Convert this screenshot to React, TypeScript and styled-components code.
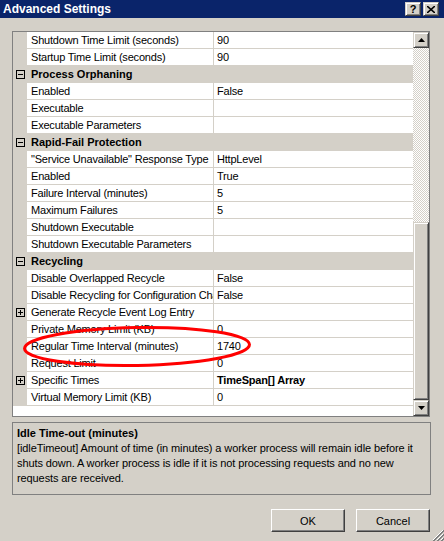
import React from "react";
import styled, { createGlobalStyle, css } from "styled-components";

const GlobalStyle = createGlobalStyle`
  html, body {
    margin: 0;
    padding: 0;
    background: #d4d0c8;
  }
  body {
    font-family: "Liberation Sans", Arial, sans-serif;
    font-size: 11px;
    color: #000;
  }
`;

type PropRow = {
  kind: "prop";
  name: string;
  value?: string;
  boldValue?: boolean;
  expand?: boolean;
};
type CatRow = { kind: "cat"; name: string };

const rows: (PropRow | CatRow)[] = [
  { kind: "prop", name: "Shutdown Time Limit (seconds)", value: "90" },
  { kind: "prop", name: "Startup Time Limit (seconds)", value: "90" },
  { kind: "cat", name: "Process Orphaning" },
  { kind: "prop", name: "Enabled", value: "False" },
  { kind: "prop", name: "Executable" },
  { kind: "prop", name: "Executable Parameters" },
  { kind: "cat", name: "Rapid-Fail Protection" },
  { kind: "prop", name: "\"Service Unavailable\" Response Type", value: "HttpLevel" },
  { kind: "prop", name: "Enabled", value: "True" },
  { kind: "prop", name: "Failure Interval (minutes)", value: "5" },
  { kind: "prop", name: "Maximum Failures", value: "5" },
  { kind: "prop", name: "Shutdown Executable" },
  { kind: "prop", name: "Shutdown Executable Parameters" },
  { kind: "cat", name: "Recycling" },
  { kind: "prop", name: "Disable Overlapped Recycle", value: "False" },
  { kind: "prop", name: "Disable Recycling for Configuration Changes", value: "False" },
  { kind: "prop", name: "Generate Recycle Event Log Entry", expand: true },
  { kind: "prop", name: "Private Memory Limit (KB)", value: "0" },
  { kind: "prop", name: "Regular Time Interval (minutes)", value: "1740" },
  { kind: "prop", name: "Request Limit", value: "0" },
  { kind: "prop", name: "Specific Times", value: "TimeSpan[] Array", boldValue: true, expand: true },
  { kind: "prop", name: "Virtual Memory Limit (KB)", value: "0" },
];

function Expander({ open }: { open: boolean }) {
  return (
    <svg width="9" height="9" viewBox="0 0 9 9">
      <rect x="0.5" y="0.5" width="8" height="8" fill="none" stroke="#000" />
      <line x1="2" y1="4.5" x2="7" y2="4.5" stroke="#000" />
      {!open && <line x1="4.5" y1="2" x2="4.5" y2="7" stroke="#000" />}
    </svg>
  );
}

function Arrow({ down }: { down?: boolean }) {
  return (
    <svg width="7" height="4" viewBox="0 0 7 4">
      <polygon points={down ? "0,0 7,0 3.5,4" : "3.5,0 7,4 0,4"} fill="#000" />
    </svg>
  );
}

export default function App() {
  return (
    <Dialog>
      <GlobalStyle />
      <TitleBar>
        <Title>Advanced Settings</Title>
        <CaptionButtons>
          <CaptionButton>?</CaptionButton>
          <CaptionButton>
            <svg width="8" height="7" viewBox="0 0 8 7">
              <path d="M0 0 L8 7 M8 0 L0 7" stroke="#000" strokeWidth="1.6" />
            </svg>
          </CaptionButton>
        </CaptionButtons>
      </TitleBar>

      <Body>
        <GridFrame>
          <GridRows>
            {rows.map((r, i) =>
              r.kind === "cat" ? (
                <Row key={i}>
                  <Gutter>
                    <Expander open />
                  </Gutter>
                  <CategoryCell>{r.name}</CategoryCell>
                </Row>
              ) : (
                <Row key={i}>
                  <Gutter>{r.expand && <Expander open={false} />}</Gutter>
                  <NameCell>{r.name}</NameCell>
                  <ValueCell bold={r.boldValue}>{r.value}</ValueCell>
                </Row>
              )
            )}
            <Filler />
          </GridRows>
          <Scrollbar>
            <ScrollButton>
              <Arrow />
            </ScrollButton>
            <ScrollTrack />
            <ScrollThumb />
            <ScrollButton>
              <Arrow down />
            </ScrollButton>
          </Scrollbar>
        </GridFrame>

        <HelpBox>
          <HelpTitle>Idle Time-out (minutes)</HelpTitle>
          <HelpText>
            [idleTimeout] Amount of time (in minutes) a worker process will remain idle before it
            <br />
            shuts down. A worker process is idle if it is not processing requests and no new
            <br />
            requests are received.
          </HelpText>
        </HelpBox>
      </Body>

      <Footer>
        <Button>OK</Button>
        <Button>Cancel</Button>
      </Footer>

      <Grip width="12" height="12" viewBox="0 0 12 12">
        <path d="M11 1 L1 11 M11 5 L5 11 M11 9 L9 11" stroke="#fff" />
        <path d="M12 1 L1 12 M12 2 L2 12 M12 5 L5 12 M12 6 L6 12 M12 9 L9 12 M12 10 L10 12" stroke="#808080" />
      </Grip>

      <Annotation width="444" height="541" viewBox="0 0 444 541">
        <ellipse
          cx="137"
          cy="346.5"
          rx="112.5"
          ry="19"
          fill="none"
          stroke="#ff0000"
          strokeWidth="3"
          transform="rotate(-1 137 346.5)"
        />
      </Annotation>
    </Dialog>
  );
}

const bevel = css`
  background: #d4d0c8;
  border: 1px solid;
  border-color: #d4d0c8 #404040 #404040 #d4d0c8;
  box-shadow: inset 1px 1px #fff, inset -1px -1px #808080;
  box-sizing: border-box;
`;

const Dialog = styled.div`
  position: relative;
  width: 444px;
  height: 541px;
  background: #d4d0c8;
  display: flex;
  flex-direction: column;
  overflow: hidden;
`;

const TitleBar = styled.div`
  height: 18px;
  background: #0a246a;
  display: flex;
  align-items: center;
  justify-content: space-between;
  padding: 0 5px 0 3px;
`;

const Title = styled.div`
  color: #fff;
  font-weight: bold;
  font-size: 12px;
`;

const CaptionButtons = styled.div`
  display: flex;
  gap: 2px;
`;

const CaptionButton = styled.div`
  ${bevel};
  width: 16px;
  height: 14px;
  display: flex;
  align-items: center;
  justify-content: center;
  font-weight: bold;
  font-size: 11px;
  line-height: 1;
`;

const Body = styled.div`
  padding: 13px 14px 0 12px;
  display: flex;
  flex-direction: column;
  gap: 5px;
`;

const GridFrame = styled.div`
  width: 418px;
  height: 386px;
  border: 1px solid #808080;
  box-sizing: border-box;
  display: flex;
  background: #fff;
`;

const GridRows = styled.div`
  flex: 1;
  display: flex;
  flex-direction: column;
  letter-spacing: -0.2px;
`;

const Row = styled.div`
  display: flex;
  height: 17px;
  flex-shrink: 0;
`;

const Gutter = styled.div`
  width: 14px;
  flex-shrink: 0;
  background: #d4d0c8;
  display: flex;
  align-items: center;
  justify-content: center;
  box-sizing: border-box;
`;

const cell = css`
  box-sizing: border-box;
  height: 17px;
  padding-top: 1px;
  line-height: 15px;
  border-bottom: 1px solid #d4d0c8;
  white-space: nowrap;
  overflow: hidden;
`;

const NameCell = styled.div`
  ${cell};
  width: 187px;
  flex-shrink: 0;
  padding-left: 4px;
  border-right: 1px solid #d4d0c8;
`;

const ValueCell = styled.div<{ bold?: boolean }>`
  ${cell};
  flex: 1;
  padding-left: 3px;
  font-weight: ${(p) => (p.bold ? "bold" : "normal")};
`;

const CategoryCell = styled.div`
  ${cell};
  flex: 1;
  padding-left: 4px;
  background: #d4d0c8;
  font-weight: bold;
  letter-spacing: 0;
`;

const Filler = styled.div`
  flex: 1;
  background: #fff;
`;

const Scrollbar = styled.div`
  width: 16px;
  display: flex;
  flex-direction: column;
`;

const ScrollButton = styled.div`
  ${bevel};
  height: 16px;
  flex-shrink: 0;
  display: flex;
  align-items: center;
  justify-content: center;
`;

const ScrollTrack = styled.div`
  height: 174px;
  flex-shrink: 0;
  background: repeating-conic-gradient(#d4d0c8 0% 25%, #fff 0% 50%) 0 0 / 2px 2px;
`;

const ScrollThumb = styled.div`
  ${bevel};
  flex: 1;
`;

const HelpBox = styled.div`
  width: 419px;
  height: 73px;
  box-sizing: border-box;
  border: 1px solid #808080;
  padding: 3px 4px;
  line-height: 15px;
`;

const HelpTitle = styled.div`
  font-weight: bold;
`;

const HelpText = styled.div`
  letter-spacing: -0.1px;
  white-space: nowrap;
`;

const Footer = styled.div`
  display: flex;
  justify-content: flex-end;
  gap: 11px;
  padding-right: 14px;
  margin-top: 14px;
`;

const Button = styled.div`
  ${bevel};
  border-color: #fff #404040 #404040 #fff;
  box-shadow: inset -1px -1px #808080;
  width: 74px;
  height: 23px;
  display: flex;
  align-items: center;
  justify-content: center;
`;

const Grip = styled.svg`
  position: absolute;
  right: 0;
  bottom: 0;
`;

const Annotation = styled.svg`
  position: absolute;
  left: 0;
  top: 0;
  pointer-events: none;
`;
